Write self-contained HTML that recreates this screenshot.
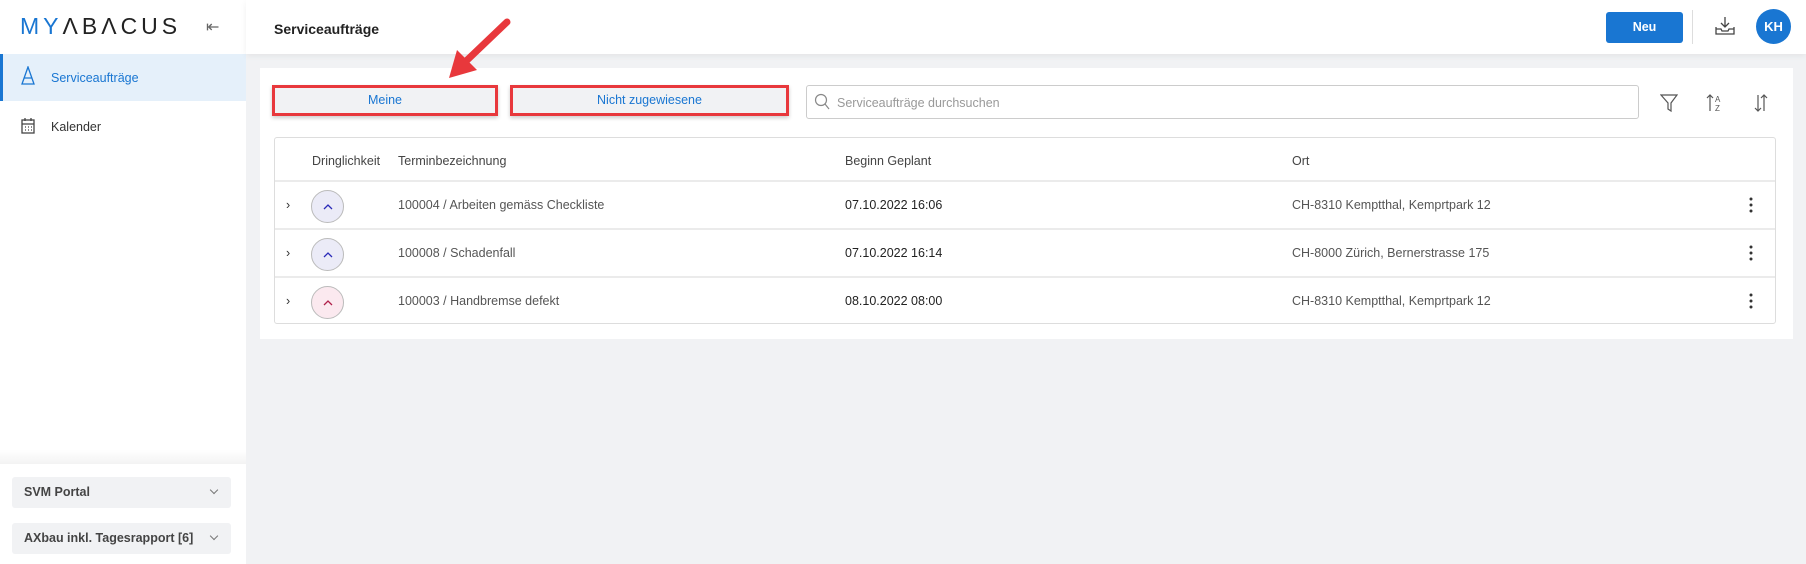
<!DOCTYPE html>
<html><head><meta charset="utf-8"><style>
*{box-sizing:border-box;margin:0;padding:0}
body{width:1806px;height:564px;overflow:hidden;background:#f1f2f4;font-family:"Liberation Sans",Arial,sans-serif;color:#333;position:relative;font-size:12.5px}
.abs{position:absolute}
.side{left:0;top:0;width:246px;height:564px;background:#fff}
.logo{left:20px;top:13px;font-size:23px;letter-spacing:4px;color:#222}
.logo span{color:#1976d2}
.nav1{left:0;top:54px;width:246px;height:47px;background:#e5f0fa;border-left:3px solid #1976d2}
.drop{left:12px;width:219px;height:31px;background:#f1f2f4;border-radius:3px;font-weight:bold;color:#444;font-size:12.5px;padding:8px 12px}
.drop:after{content:"";position:absolute;right:14px;top:10px;width:5px;height:5px;border-right:1px solid #777;border-bottom:1px solid #777;transform:rotate(45deg)}
.header{left:246px;top:0;width:1560px;height:54px;background:#fff;box-shadow:0 2px 6px rgba(0,0,0,.06)}
.card{left:260px;top:68px;width:1533px;height:271px;background:#fff}
.tab{top:85px;height:31px;background:#f1f2f4;border:3px solid #e8383c;color:#1976d2;text-align:center;line-height:25px;box-shadow:0 2px 4px rgba(0,0,0,.2)}
.search{left:806px;top:85px;width:833px;height:34px;border:1px solid #ccc;border-radius:3px;color:#999;padding:10px 0 0 30px}
.table{left:274px;top:137px;width:1502px;height:187px;border:1px solid #ddd;border-radius:3px}
.row{position:absolute;left:0;width:1500px;border-top:2px solid #ebebeb;height:48px}
.row > div{position:absolute;top:16px}
.row > div.circ{top:8px}
.circ{width:33px;height:33px;border-radius:50%;border:1px solid #bbb;left:36px}
.circ svg{position:absolute;left:11px;top:12px}
.th{position:absolute;top:16px;color:#444}
</style></head><body>
<div class="abs side"></div>
<div class="abs logo"><span>MY</span>ΛBΛCUS</div>
<div class="abs" style="left:206px;top:17px;font-size:16px;color:#666">⇤</div>
<div class="abs nav1"></div>
<svg class="abs" style="left:20px;top:66px" width="16" height="20"><path d="M8 1 L2 18 H14 Z M4 12 H12 M3 18 H13" fill="none" stroke="#1976d2" stroke-width="1.3"/></svg>
<div class="abs" style="left:51px;top:71px;color:#1976d2">Serviceaufträge</div>
<svg class="abs" style="left:21px;top:117px" width="14" height="17"><rect x="1" y="3" width="12" height="13" fill="none" stroke="#444" stroke-width="1.3"/><path d="M1 7H13M4 1V4M10 1V4M4 10h1M7 10h1M10 10h1M4 13h1M7 13h1M10 13h1" stroke="#444" stroke-width="1.3"/></svg>
<div class="abs" style="left:51px;top:120px;color:#333">Kalender</div>
<div class="abs" style="left:0;top:450px;width:246px;height:14px;background:linear-gradient(#fff,#f3f3f3)"></div>
<div class="abs drop" style="top:477px">SVM Portal</div>
<div class="abs drop" style="top:523px">AXbau inkl. Tagesrapport [6]</div>
<div class="abs header"></div>
<div class="abs" style="left:274px;top:21px;font-weight:bold;font-size:14px;color:#222">Serviceaufträge</div>
<div class="abs" style="left:1606px;top:12px;width:77px;height:31px;background:#1976d2;border-radius:3px;color:#fff;font-weight:bold;text-align:center;line-height:31px">Neu</div>
<div class="abs" style="left:1692px;top:10px;width:1px;height:34px;background:#ddd"></div>
<svg class="abs" style="left:1714px;top:15px" width="22" height="22"><path d="M11 2V12M7 8L11 12L15 8M2 12V19H20V12M2 14H7L8 16H14L15 14H20" fill="none" stroke="#444" stroke-width="1.3"/></svg>
<div class="abs" style="left:1756px;top:9px;width:35px;height:35px;border-radius:50%;background:#1976d2;color:#fff;font-weight:bold;text-align:center;line-height:35px;font-size:13px">KH</div>
<div class="abs card"></div>
<svg class="abs" style="left:445px;top:16px" width="70" height="66"><path d="M62 6 L18 48" stroke="#e8383c" stroke-width="7" stroke-linecap="round"/><path d="M4 62 L12 34 L32 54 Z" fill="#e8383c"/></svg>
<div class="abs tab" style="left:272px;width:226px">Meine</div>
<div class="abs tab" style="left:510px;width:279px">Nicht zugewiesene</div>
<div class="abs search">Serviceaufträge durchsuchen</div>
<svg class="abs" style="left:814px;top:93px" width="16" height="18"><circle cx="7" cy="7" r="5.5" fill="none" stroke="#888" stroke-width="1.2"/><path d="M11 11L15 16" stroke="#888" stroke-width="1.2"/></svg>
<svg class="abs" style="left:1660px;top:93px" width="18" height="20"><path d="M1 2H17L11 10V18L8 16V10Z" fill="none" stroke="#555" stroke-width="1.2"/></svg>
<svg class="abs" style="left:1706px;top:93px" width="18" height="20"><path d="M4 18V2M1 5L4 2L7 5" fill="none" stroke="#555" stroke-width="1.2"/><text x="9" y="9" font-size="8" fill="#555" font-family="Liberation Sans">A</text><text x="9" y="18" font-size="8" fill="#555" font-family="Liberation Sans">Z</text></svg>
<svg class="abs" style="left:1752px;top:93px" width="18" height="20"><path d="M6 2V18M3 15L6 18L9 15M12 18V2M9 5L12 2L15 5" fill="none" stroke="#555" stroke-width="1.2"/></svg>
<div class="abs table">
<div class="th" style="left:37px">Dringlichkeit</div>
<div class="th" style="left:123px">Terminbezeichnung</div>
<div class="th" style="left:570px">Beginn Geplant</div>
<div class="th" style="left:1017px">Ort</div>
<div class="row" style="top:42px"><div style="left:11px">›</div><div class="circ" style="background:#ebebf7"><svg width="10" height="7"><path d="M1 6L5 2L9 6" fill="none" stroke="#2a2ab8" stroke-width="1.3"/></svg></div><div style="left:123px;color:#555">100004 / Arbeiten gemäss Checkliste</div><div style="left:570px;color:#222">07.10.2022 16:06</div><div style="left:1017px;color:#555">CH-8310 Kemptthal, Kemprtpark 12</div><div style="left:1474px;top:15px"><svg width="4" height="16"><circle cx="2" cy="2" r="1.5" fill="#333"/><circle cx="2" cy="8" r="1.5" fill="#333"/><circle cx="2" cy="14" r="1.5" fill="#333"/></svg></div></div>
<div class="row" style="top:90px"><div style="left:11px">›</div><div class="circ" style="background:#ebebf7"><svg width="10" height="7"><path d="M1 6L5 2L9 6" fill="none" stroke="#2a2ab8" stroke-width="1.3"/></svg></div><div style="left:123px;color:#555">100008 / Schadenfall</div><div style="left:570px;color:#222">07.10.2022 16:14</div><div style="left:1017px;color:#555">CH-8000 Zürich, Bernerstrasse 175</div><div style="left:1474px;top:15px"><svg width="4" height="16"><circle cx="2" cy="2" r="1.5" fill="#333"/><circle cx="2" cy="8" r="1.5" fill="#333"/><circle cx="2" cy="14" r="1.5" fill="#333"/></svg></div></div>
<div class="row" style="top:138px"><div style="left:11px">›</div><div class="circ" style="background:#fbe9ef"><svg width="10" height="7"><path d="M1 6L5 2L9 6" fill="none" stroke="#b0204a" stroke-width="1.3"/></svg></div><div style="left:123px;color:#555">100003 / Handbremse defekt</div><div style="left:570px;color:#222">08.10.2022 08:00</div><div style="left:1017px;color:#555">CH-8310 Kemptthal, Kemprtpark 12</div><div style="left:1474px;top:15px"><svg width="4" height="16"><circle cx="2" cy="2" r="1.5" fill="#333"/><circle cx="2" cy="8" r="1.5" fill="#333"/><circle cx="2" cy="14" r="1.5" fill="#333"/></svg></div></div>
</div>
</body></html>
